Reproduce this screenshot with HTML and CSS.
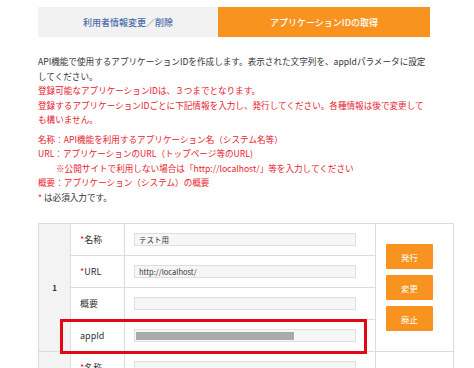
FILE: index.html
```html
<!DOCTYPE html>
<html lang="ja">
<head>
    <meta charset="UTF-8">
    <title>アプリケーションIDの取得</title>
    <link rel="stylesheet" href="styles.css">
</head>
<body>
    <div class="wrap">
        <!-- tabs -->
        <div class="tabs">
            <a href="#" class="tab">利用者情報変更／削除</a>
            <a href="#" class="tab active">アプリケーションIDの取得</a>
        </div>

        <div class="intro">
            <p>API機能で使用するアプリケーションIDを作成します。表示された文字列を、appIdパラメータに設定してください。</p>
            <p class="red">登録可能なアプリケーションIDは、３つまでとなります。</p>
            <p class="red">登録するアプリケーションIDごとに下記情報を入力し、発行してください。各種情報は後で変更しても構いません。</p>
        </div>

        <div class="intro red">
            <p>名称：API機能を利用するアプリケーション名（システム名等）</p>
            <p>URL：アプリケーションのURL（トップページ等のURL)</p>
            <p class="note">※公開サイトで利用しない場合は「http://localhost/」等を入力してください</p>
            <p>概要：アプリケーション（システム）の概要</p>
        </div>

        <p class="req"><span class="mark">*</span> は必須入力です。</p>

        <div class="table-box">
            <table class="apps">
                <tr>
                    <td class="num" rowspan="4">1</td>
                    <th><span class="mark">*</span>名称</th>
                    <td class="field"><input type="text" value="テスト用"></td>
                    <td class="btns" rowspan="4">
                        <button class="btn">発行</button>
                        <button class="btn">変更</button>
                        <button class="btn">廃止</button>
                    </td>
                </tr>
                <tr>
                    <th><span class="mark">*</span>URL</th>
                    <td class="field"><input type="text" value="http://localhost/"></td>
                </tr>
                <tr>
                    <th>概要</th>
                    <td class="field"><input type="text" value=""></td>
                </tr>
                <tr>
                    <th>appId</th>
                    <td class="field"><div class="appid"><span class="masked"></span></div></td>
                </tr>
                <tr>
                    <td class="num" rowspan="4"></td>
                    <th><span class="mark">*</span>名称</th>
                    <td class="field"><input type="text" value=""></td>
                    <td class="btns" rowspan="4"></td>
                </tr>
            </table>
            <!-- highlight around appId -->
            <div class="highlight"></div>
        </div>
    </div>
</body>
</html>
```

FILE: styles.css
```css
body {
    margin: 0;
    padding-top: 7px;
    background: #fff;
    color: #333;
    font-family: "Noto Sans CJK JP", "Noto Sans", sans-serif;
    font-size: 8.6px;
    overflow: hidden;
}

.wrap {
    width: 392px;
    margin-left: 38px;
}

.tabs {
    display: flex;
    height: 30px;
}

    .tabs .tab {
        display: flex;
        align-items: center;
        justify-content: center;
        text-decoration: none;
        font-size: 9px;
        font-weight: 500;
        background-color: #f2f2f2;
        color: #4a6da8;
        width: 180px;
    }

    .tabs .active {
        background-color: #f8931f;
        color: #fff;
        flex: 1;
    }

.intro {
    margin-top: 17px;
    line-height: 14.5px;
}

    .intro p {
        margin: 0;
    }

    .intro + .intro {
        margin-top: 5px;
    }

.red {
    color: #e8212e;
}

.note {
    padding-left: 18px;
}

.req {
    margin: 0;
    line-height: 14.5px;
}

.mark {
    color: #e8212e;
}

.table-box {
    position: relative;
    margin-top: 19px;
}

.apps {
    border-collapse: collapse;
    width: 392px;
    table-layout: fixed;
}

    .apps td, .apps th {
        border: 1px solid #dcdcdc;
        height: 31px;
        padding: 0;
    }

    .apps th {
        width: 44px;
        padding-left: 9px;
        text-align: left;
        font-weight: normal;
        font-size: 9px;
    }

    .apps .num {
        width: 31px;
        background-color: #f3f3f3;
        text-align: center;
        font-weight: bold;
        font-size: 8px;
    }

    .apps .field {
        width: 241px;
        padding-left: 9px;
    }

    .apps .btns {
        width: 67px;
        padding-left: 10px;
    }

.field input, .appid {
    box-sizing: border-box;
    display: block;
    width: 222px;
    height: 13px;
    margin: 0;
    padding: 0 4px;
    border: 1px solid #dedede;
    background-color: #f6f6f6;
    font-family: inherit;
    font-size: 7.5px;
    color: #333;
    outline: none;
}

.appid {
    padding: 2px 1px;
}

    .appid .masked {
        display: block;
        width: 158px;
        height: 8px;
        background-color: #a9a9a9;
    }

.btn {
    display: block;
    width: 47px;
    height: 25px;
    margin: 0 0 6px;
    border: none;
    border-radius: 1px;
    background-color: #f8931f;
    color: #fff;
    font-family: inherit;
    font-size: 8.5px;
}

    .btn:last-child {
        margin-bottom: 0;
    }

.highlight {
    position: absolute;
    left: 22px;
    top: 96px;
    width: 301px;
    height: 29px;
    border: 3px solid #e30613;
}
```
